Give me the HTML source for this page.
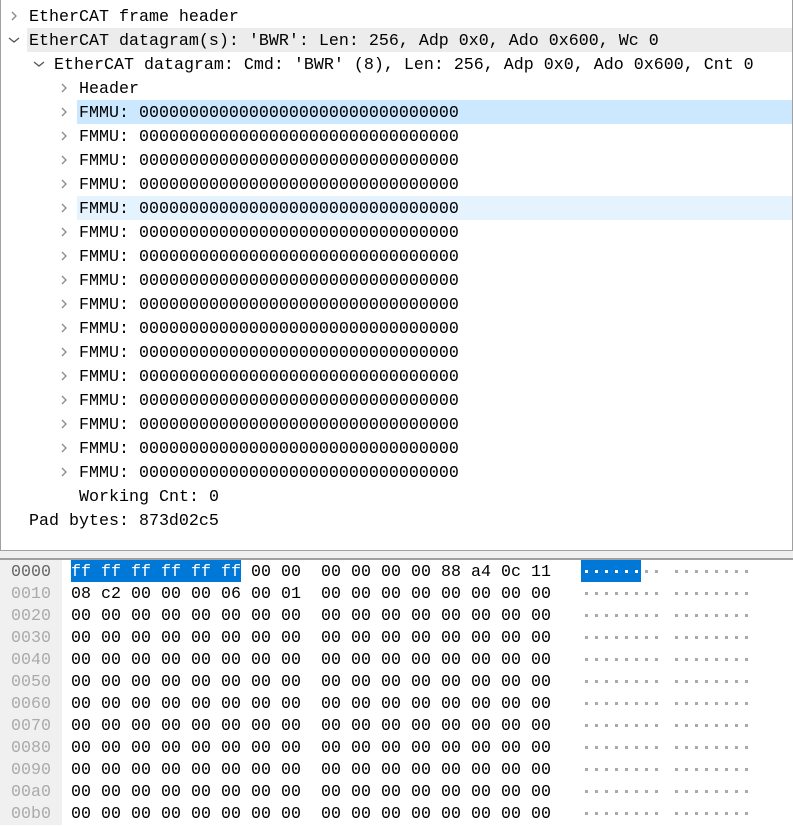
<!DOCTYPE html>
<html><head><style>
body{margin:0;width:793px;height:825px;overflow:hidden;background:#fff;font-family:"Liberation Mono",monospace;font-size:16.67px;color:#000}
#top{position:absolute;left:0;top:0;width:791px;height:550px;border-left:1px solid #a0a0a0;border-right:1px solid #a0a0a0;border-bottom:1px solid #a0a0a0}
.r{position:absolute;height:24px;line-height:24px;white-space:pre;left:0;right:0}
.r span{top:2px}
.c{position:absolute;top:0}
#split{position:absolute;left:0;top:551px;width:793px;height:7px;background:#f0f0f0;border-bottom:2px solid #a0a0a0}
#off{position:absolute;left:0;top:560px;width:62px;height:265px;background:#f0f0f0}
.h{position:absolute;height:22px;line-height:22px;white-space:pre;left:0}
.h span{top:2px}
.o{position:absolute;left:11px;color:#aaa}
.dot{position:absolute;width:3px;height:3px;top:10px}
</style></head><body>
<div id="top">
<div class="r" style="top:4px"><svg class="c" style="left:8px;top:7px" width="10" height="10"><path d="M3 1l4 4-4 4" fill="none" stroke="#888" stroke-width="1.3"/></svg><span style="position:absolute;left:28px">EtherCAT frame header</span></div>
<div class="r" style="top:28px;"><div style="position:absolute;left:26px;right:0;top:0;bottom:0;background:#ececec"></div><svg class="c" style="left:7px;top:7px" width="12" height="10"><path d="M1 3l5 4 5-4" fill="none" stroke="#555" stroke-width="1.3"/></svg><span style="position:absolute;left:28px">EtherCAT datagram(s): 'BWR': Len: 256, Adp 0x0, Ado 0x600, Wc 0</span></div>
<div class="r" style="top:52px"><svg class="c" style="left:32px;top:7px" width="12" height="10"><path d="M1 3l5 4 5-4" fill="none" stroke="#555" stroke-width="1.3"/></svg><span style="position:absolute;left:53px">EtherCAT datagram: Cmd: 'BWR' (8), Len: 256, Adp 0x0, Ado 0x600, Cnt 0</span></div>
<div class="r" style="top:76px"><svg class="c" style="left:58px;top:7px" width="10" height="10"><path d="M3 1l4 4-4 4" fill="none" stroke="#888" stroke-width="1.3"/></svg><span style="position:absolute;left:78px">Header</span></div>
<div id="fm"></div>
<div class="r" style="top:484px"><span style="position:absolute;left:78px">Working Cnt: 0</span></div>
<div class="r" style="top:508px"><span style="position:absolute;left:28px">Pad bytes: 873d02c5</span></div>
</div>
<div id="split"></div>
<div id="off"></div>
<div id="hex"></div>
<script>
var fm='';for(var i=0;i<16;i++){var t=100+i*24;var bg=i==0?'#cce8ff':(i==4?'#e5f3ff':'');
fm+='<div class="r" style="top:'+t+'px">'+(bg?'<div style="position:absolute;left:76px;right:0;top:0;bottom:0;background:'+bg+'"></div>':'')+'<svg class="c" style="left:58px;top:7px" width="10" height="10"><path d="M3 1l4 4-4 4" fill="none" stroke="#888" stroke-width="1.3"/></svg><span style="position:absolute;left:78px">FMMU: 00000000000000000000000000000000</span></div>';}
document.getElementById('fm').outerHTML=fm;
var rows=[["ff","ff","ff","ff","ff","ff","00","00","00","00","00","00","88","a4","0c","11"],["08","c2","00","00","00","06","00","01","00","00","00","00","00","00","00","00"]];
var h='';for(var r=0;r<12;r++){var t=560+r*22;var b=rows[r]||Array(16).fill("00");
var off=('000'+(r*16).toString(16)).slice(-4);
h+='<div class="h" style="top:'+t+'px;width:793px"><span class="o" style="color:'+(r==0?'#666':'#aaa')+'">'+off+'</span>';
if(r==0)h+='<div style="position:absolute;left:71px;width:170px;top:0;height:22px;background:#0078d7"></div><div style="position:absolute;left:581px;width:60px;top:0;height:22px;background:#0078d7"></div>';
for(var j=0;j<16;j++){var x=71+j*30+(j>=8?10:0);h+='<span style="position:absolute;left:'+x+'px;color:'+(r==0&&j<6?'#fff':'#000')+'">'+b[j]+'</span>';}
for(var j=0;j<16;j++){var x=585+j*10+(j>=8?10:0);h+='<div class="dot" style="left:'+x+'px;background:'+(r==0&&j<6?'#fff':'#aaa')+'"></div>';}
h+='</div>';}
document.getElementById('hex').innerHTML=h;
</script>
</body></html>
